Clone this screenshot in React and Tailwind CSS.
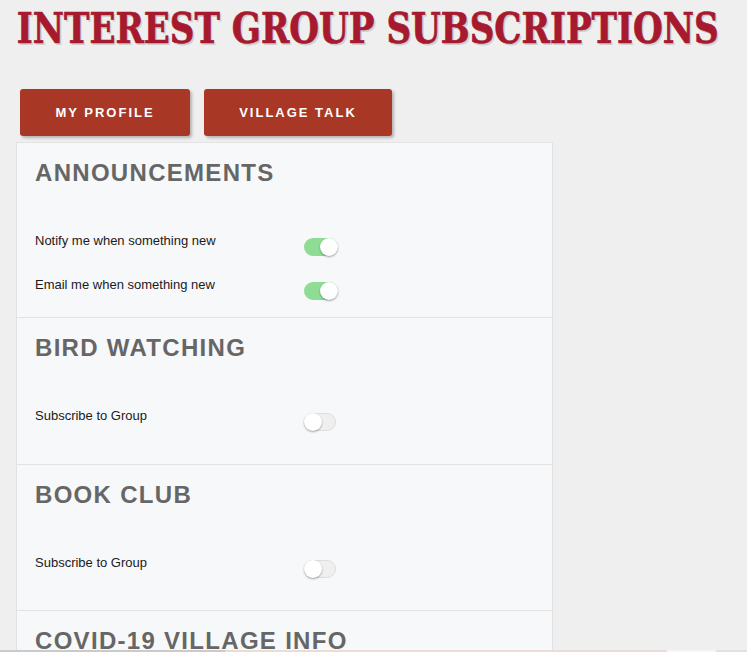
import React from "react";

function Toggle({ on }) {
  return on ? (
    <div className="relative mt-[5px] h-[18px] w-[34px] shrink-0 rounded-full bg-[#8fdc95]">
      <div className="absolute right-0 top-0 h-[18px] w-[18px] rounded-full bg-white shadow-[0_1px_2px_rgba(0,0,0,0.35)]" />
    </div>
  ) : (
    <div className="relative mt-[5px] h-[18px] w-[32px] shrink-0 rounded-full border border-[#dedede] bg-[#efefef]">
      <div className="absolute left-[-1px] top-[-1px] h-[18px] w-[18px] rounded-full bg-white shadow-[0_1px_2px_rgba(0,0,0,0.35)]" />
    </div>
  );
}

function Row({ label, on }) {
  return (
    <div className="flex items-start">
      <div className="w-[269px] text-[13px] leading-4 text-[#1a1a1a]">{label}</div>
      <Toggle on={on} />
    </div>
  );
}

function Section({ title, rows, last, minClass }) {
  return (
    <div
      className={
        "px-[18px] pt-[16px] " +
        (last ? "" : "border-b border-[#e2e2e2] ") +
        (minClass ? minClass : "pb-[17px]")
      }
    >
      <h2 className="text-[24px] font-bold leading-[28px] tracking-[1.3px] text-[#666666]">{title}</h2>
      <div className="mt-[46px] flex flex-col gap-[21px]">
        {rows.map((r, i) => (
          <Row key={i} label={r.label} on={r.on} />
        ))}
      </div>
    </div>
  );
}

export default function App() {
  return (
    <div className="min-h-screen overflow-hidden bg-[#efefef] pl-[16px] font-['Liberation_Sans',Arial,sans-serif]">
      <h1 className="pt-[8px] pl-[1px] font-['DejaVu_Serif',serif] text-[42px] font-bold leading-[42px] text-[#a6192e] [transform:scaleX(0.813)] [transform-origin:left_top] [text-shadow:2px_2px_0_#cfcfcf] [-webkit-text-stroke:0.7px_#a6192e] whitespace-nowrap">
        INTEREST GROUP SUBSCRIPTIONS
      </h1>
      <div className="mt-[39px] flex gap-[14px] pl-[4px]">
        <button className="h-[47px] w-[170px] rounded-[3px] bg-[#a93726] text-[13px] font-bold tracking-[2px] text-white shadow-[2px_2px_3px_rgba(0,0,0,0.25)]">
          MY PROFILE
        </button>
        <button className="h-[47px] w-[188px] rounded-[3px] bg-[#a93726] text-[13px] font-bold tracking-[2px] text-white shadow-[2px_2px_3px_rgba(0,0,0,0.25)]">
          VILLAGE TALK
        </button>
      </div>
      <div className="mt-[6px] w-[537px] border border-[#e2e2e2] bg-[#f7f8fa]">
        <Section
          title="ANNOUNCEMENTS"
          rows={[
            { label: "Notify me when something new", on: true },
            { label: "Email me when something new", on: true },
          ]}
        />
        <Section title="BIRD WATCHING" minClass="min-h-[147px]" rows={[{ label: "Subscribe to Group", on: false }]} />
        <Section title="BOOK CLUB" minClass="min-h-[146px]" rows={[{ label: "Subscribe to Group", on: false }]} />
        <Section title="COVID-19 VILLAGE INFO" minClass="min-h-[146px]" last rows={[{ label: "Subscribe to Group", on: false }]} />
      </div>
      <div className="fixed bottom-0 left-0 flex h-[2px] w-full">
        <div className="w-[225px] bg-[#cacaca]" />
        <div className="w-[442px] bg-[#ebdcd8]" />
        <div className="w-[49px] bg-[#f5f5f5]" />
        <div className="flex-1 bg-[#e1e1e1]" />
      </div>
    </div>
  );
}
